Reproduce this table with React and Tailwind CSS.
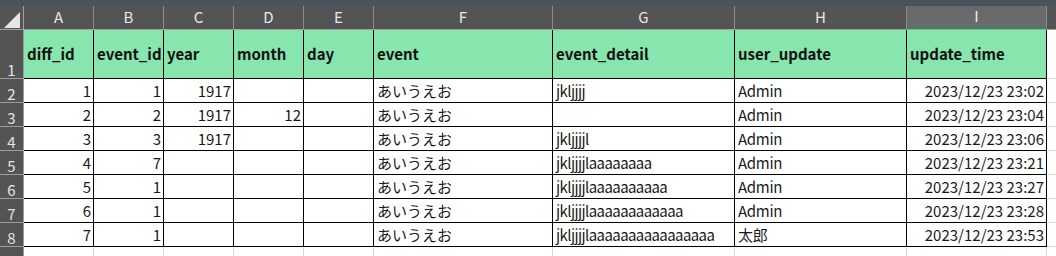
import React from 'react';

const cols = [
  { key: 'A', w: 'w-[70px]' },
  { key: 'B', w: 'w-[70px]' },
  { key: 'C', w: 'w-[70px]' },
  { key: 'D', w: 'w-[70px]' },
  { key: 'E', w: 'w-[70px]' },
  { key: 'F', w: 'w-[179px]' },
  { key: 'G', w: 'w-[182px]' },
  { key: 'H', w: 'w-[172px]' },
  { key: 'I', w: 'w-[140px]' },
];

const headers = ['diff_id', 'event_id', 'year', 'month', 'day', 'event', 'event_detail', 'user_update', 'update_time'];

// [diff_id, event_id, year, month, day, event, detail, user, time]
const rows = [
  [1, 1, 1917, '', '', 'あいうえお', 'jkljjjj', 'Admin', '2023/12/23 23:02'],
  [2, 2, 1917, 12, '', 'あいうえお', '', 'Admin', '2023/12/23 23:04'],
  [3, 3, 1917, '', '', 'あいうえお', 'jkljjjjl', 'Admin', '2023/12/23 23:06'],
  [4, 7, '', '', '', 'あいうえお', 'jkljjjjlaaaaaaaa', 'Admin', '2023/12/23 23:21'],
  [5, 1, '', '', '', 'あいうえお', 'jkljjjjlaaaaaaaaaa', 'Admin', '2023/12/23 23:27'],
  [6, 1, '', '', '', 'あいうえお', 'jkljjjjlaaaaaaaaaaaa', 'Admin', '2023/12/23 23:28'],
  [7, 1, '', '', '', 'あいうえお', 'jkljjjjlaaaaaaaaaaaaaaaa', '太郎', '2023/12/23 23:53'],
];

const font = { fontFamily: '"Noto Sans CJK JP", "Noto Sans", sans-serif' };

const RowHead = ({ n, tall }) => (
  <div className={`w-[24px] shrink-0 bg-[#545454] border-r border-b border-[#9c9c9c] text-[#e4e4e4] text-[15px] flex items-end justify-center pb-[1px] leading-none ${tall ? 'h-[49px]' : 'h-[24px]'}`}>
    {n}
  </div>
);

export default function App() {
  return (
    <div className="w-[1056px] h-[256px] overflow-hidden bg-white" style={font}>
      {/* title strip */}
      <div className="h-[6px] bg-[#4a535c]" />

      {/* column letters */}
      <div className="flex h-[24px] bg-[#545454] border-b border-[#a0a0a0]">
        <div className="w-[24px] shrink-0 border-r border-[#a0a0a0] relative">
          <svg width="20" height="20" viewBox="0 0 20 20" className="absolute left-[2px] top-[3px]">
            <polygon points="2,19 18,19 18,3" fill="#e6e6e6" />
          </svg>
        </div>
        {cols.map((c) => (
          <div
            key={c.key}
            className={`${c.w} shrink-0 flex items-center justify-center text-[15px] border-r border-[#8c8c8c] ${c.key === 'I' ? 'bg-[#6a6a6a] text-[#f0f0f0] border-b-2 border-b-[#2e8b57]' : 'text-[#e8e8e8]'}`}
          >
            {c.key}
          </div>
        ))}
        <div className="flex-1" />
      </div>

      {/* header row */}
      <div className="flex">
        <RowHead n={1} tall />
        {headers.map((h, i) => (
          <div
            key={h}
            className={`${cols[i].w} shrink-0 h-[49px] bg-[#87e5ae] border-r border-b border-black flex items-center pl-[3px] text-[15px] font-bold text-[#111] whitespace-nowrap overflow-hidden`}
          >
            {h}
          </div>
        ))}
        <div className="flex-1 h-[49px] border-b border-[#d8d8d8]" />
      </div>

      {/* data rows */}
      {rows.map((r, ri) => (
        <div key={ri} className="flex">
          <RowHead n={ri + 2} />
          {r.map((v, ci) => {
            const num = ci < 5 || ci === 8;
            const track = ci === 6 ? 'tracking-[-0.6px]' : ci === 7 ? 'tracking-[-0.3px]' : '';
            return (
              <div
                key={ci}
                className={`${cols[ci].w} shrink-0 h-[24px] border-r border-b border-black flex items-end pb-[2px] text-[15px] leading-[18px] text-[#1a1a1a] whitespace-nowrap overflow-hidden ${track} ${num ? 'justify-end pr-[2px]' : 'justify-start pl-[3px]'}`}
              >
                {v}
              </div>
            );
          })}
          <div className="flex-1 h-[24px] border-b border-[#d8d8d8]" />
        </div>
      ))}

      {/* row 9 */}
      <div className="flex">
        <RowHead n={9} />
        {cols.map((c) => (
          <div key={c.key} className={`${c.w} shrink-0 h-[24px] border-r border-[#d8d8d8]`} />
        ))}
      </div>
    </div>
  );
}
